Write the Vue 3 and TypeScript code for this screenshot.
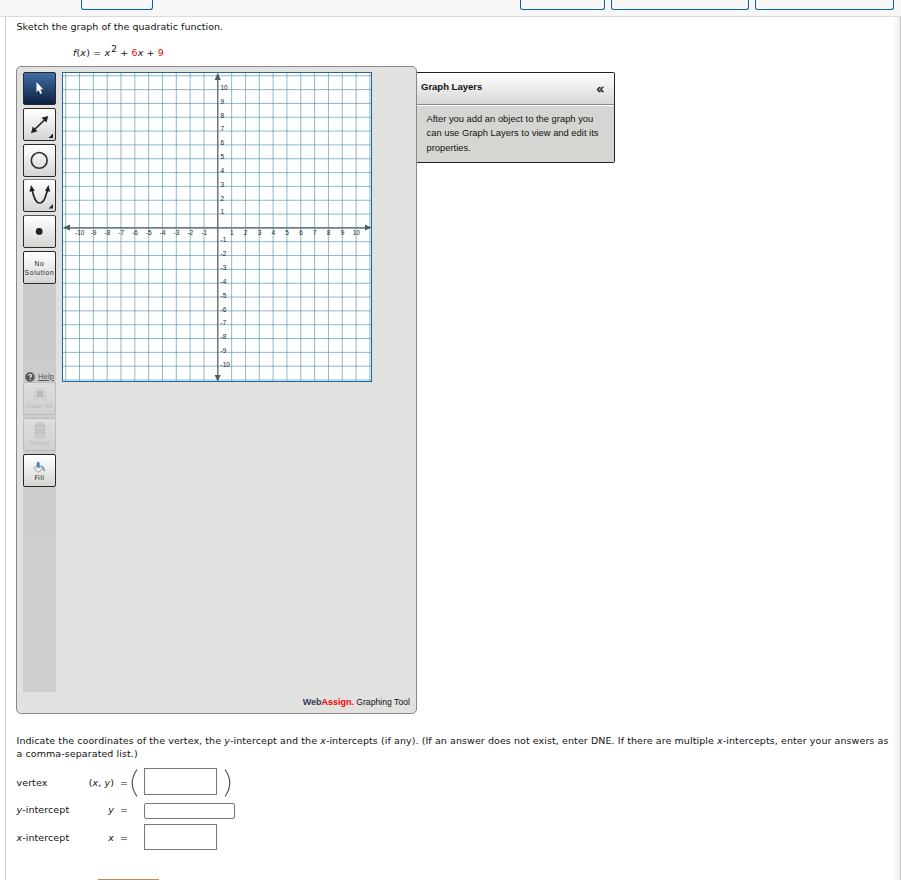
<script setup lang="ts">
const step = 13.83
const cx = 155.8
const cy = 155.9
const lines: number[] = Array.from({ length: 23 }, (_, i) => i - 11)
const labels: number[] = lines.filter((n) => n !== 0 && Math.abs(n) < 11)
</script>

<template>
  <div class="page">
    <header class="topbar">
      <span class="tab tab-a"></span>
      <span class="tab tab-b"></span>
      <span class="tab tab-c"></span>
      <span class="tab tab-d"></span>
    </header>
    <main class="content">
      <p class="prompt">Sketch the graph of the quadratic function.</p>
      <p class="formula"><i>f</i>(<i>x</i>) = <i>x</i><sup>2</sup> + <b>6</b><i>x</i> + <b>9</b></p>

      <section class="workspace">
        <div class="tool">
          <nav class="strip">
            <button class="btn active" aria-label="Select">
              <svg width="31" height="31" viewBox="0 0 31 31"><path d="M12.500 9V19l2.100-1.800 1.800 3.900 1.700-.8-1.800-3.800 2.800-.2z" fill="#fff" /></svg>
            </button>
            <button class="btn" aria-label="Line">
              <svg width="31" height="31" viewBox="0 0 31 31"><path d="M10 21 21.500 10" stroke="#222" stroke-width="1.700" /><path d="M24.200 7 22.500 13.500 17.500 8.800zM7 24.200 13.500 22.200 8.800 17.500zM29 24.500v4.500H24.500z" fill="#222" /></svg>
            </button>
            <button class="btn" aria-label="Circle">
              <svg width="31" height="31" viewBox="0 0 31 31"><circle cx="15.200" cy="15.400" r="7.900" fill="none" stroke="#2b2b2b" stroke-width="1.600" /></svg>
            </button>
            <button class="btn" aria-label="Parabola">
              <svg width="31" height="31" viewBox="0 0 31 31"><path d="M8 10C10.500 19 12 23 15.700 23S21 19 23.500 10" fill="none" stroke="#222" stroke-width="1.700" /><path d="M7 5 10.800 10.800 5.500 11.800zM24.500 5 26.200 11.800 21 10.800zM29 24V28.500H24.500z" fill="#222" /></svg>
            </button>
            <button class="btn" aria-label="Point">
              <svg width="31" height="31" viewBox="0 0 31 31"><circle cx="15.200" cy="15.400" r="3.400" fill="#222" /></svg>
            </button>
            <button class="btn words">No<br />Solution</button>
            <a class="help">
              <svg width="10" height="10" viewBox="0 0 9 9"><circle cx="4.500" cy="4.500" r="4" fill="#555" stroke="#777" /><path d="M3.200 3.400Q3.300 2.200 4.600 2.200T6 3.400Q6 4 4.700 4.700V5.500M4.700 6.400V7.300" fill="none" stroke="#fff" stroke-width="1" /></svg><u>Help</u>
            </a>
            <button class="btn faded">
              <svg width="12" height="12" viewBox="0 0 12 12"><rect x=".5" y=".5" width="11" height="11" fill="none" stroke="#c2c2c2" stroke-dasharray="1 1" /><rect x="2.500" y="2.500" width="7" height="7" fill="#bbb" /></svg><span>Clear All</span>
            </button>
            <button class="btn faded bin">
              <svg width="12" height="16" viewBox="0 0 12 16"><path d="M.5 3H11.500M4 2.500V1H8V2.500M1.500 4.500 2.300 15H9.700L10.500 4.500zM4 6V13M6 6V13M8 6V13" fill="none" stroke="#b8b8b8" stroke-width="1.200" /></svg><span>Delete</span>
            </button>
            <button class="btn fill">
              <svg width="13" height="13" viewBox="0 0 13 13"><path d="M1 7 5.500 3.500 9.500 8 5 11.500z" fill="#eee" stroke="#888" stroke-width=".8" /><path d="M4 6.200V1.800Q5 0 6.300 1.800V7" fill="#4a84c4" stroke="#477eb9" stroke-width=".6" /><path d="M7 4Q12 4.500 12.100 11 9.500 9 9.500 7z" fill="#6c9bcb" /></svg><span>Fill</span>
            </button>
          </nav>
          <svg class="plot" width="310" height="310" viewBox="0 0 310 310">
            <rect width="310" height="310" fill="#fff" />
            <g stroke="#468fad" stroke-opacity=".62" stroke-width="1">
              <line v-for="n in lines" :key="'v' + n" :x1="cx + n * step" :x2="cx + n * step" y1="0" y2="310" />
              <line v-for="n in lines" :key="'h' + n" x1="0" x2="310" :y1="cy + n * step" :y2="cy + n * step" />
            </g>
            <path :d="`M${cx} 2V308M2 ${cy}H308`" stroke="#53626b" stroke-width="1.100" />
            <path d="M155.700 1 158.800 8H152.600zM155.700 309.500 158.800 303H152.600zM1 155.600 8 152.600V158.600zM309.500 155.600 303 152.600V158.600z" fill="#535d61" />
            <g class="num">
              <text v-for="n in labels" :key="'x' + n" :x="cx + n * step + .2" y="163" text-anchor="middle">{{ n }}</text>
              <text v-for="n in labels" :key="'y' + n" x="158.500" :y="cy - n * step + (n < 0 ? .7 : .4)">{{ n }}</text>
            </g>
            <rect x=".5" y=".5" width="309" height="309" fill="none" stroke="#2864a4" />
          </svg>
          <footer class="brand"><strong>Web<em>Assign.</em></strong> Graphing Tool</footer>
        </div>
        <aside class="layers">
          <h2><span>Graph Layers</span><span class="chev">«</span></h2>
          <p>After you add an object to the graph you<br />can use Graph Layers to view and edit its<br />properties.</p>
        </aside>
      </section>

      <p class="question">Indicate the coordinates of the vertex, the <i>y</i>-intercept and the <i>x</i>-intercepts (if any). (If an answer does not exist, enter DNE. If there are multiple <i>x</i>-intercepts, enter your answers as<br />a comma-separated list.)</p>
      <div class="answers">
        <span>vertex</span><span class="lhs">(<i>x</i>, <i>y</i>)</span><span class="eq">=</span>
        <svg class="paren" width="7" height="28" viewBox="0 0 7 28"><path d="M6 .5Q-3.500 14 6 27.500" fill="none" stroke="#555" stroke-width="1.200" /></svg>
        <input class="box first" aria-label="vertex" />
        <svg class="paren end" width="7" height="28" viewBox="0 0 7 28"><path d="M1 .5Q10.500 14 1 27.500" fill="none" stroke="#555" stroke-width="1.200" /></svg>
      </div>
      <div class="answers second">
        <span><i>y</i>-intercept</span><span class="lhs"><i>y</i></span><span class="eq">=</span><span class="paren"></span><input class="box thin" aria-label="y-intercept" />
      </div>
      <div class="answers third">
        <span><i>x</i>-intercept</span><span class="lhs"><i>x</i></span><span class="eq">=</span><span class="paren"></span><input class="box" aria-label="x-intercept" />
      </div>
      <div class="next"></div>
    </main>
  </div>
</template>

<style>
body { margin: 0; background: #fff; overflow: hidden; }
</style>

<style scoped>
* { box-sizing: border-box; }
.page { width: 901px; height: 880px; overflow: hidden; font: 9.5px/13px Verdana, "DejaVu Sans", sans-serif; letter-spacing: .08px; color: #111; background: #fff; }
.topbar { height: 17px; display: flex; background: #f7f7f7; border-bottom: 1px solid #ddd; padding-left: 81px; }
.tab { height: 10px; border: 1px solid #086396; border-top: 0; border-radius: 0 0 3px 3px; flex: none; }
.tab-a { width: 72px; margin-right: 367px; }
.tab-b { width: 85px; margin-right: 6px; }
.tab-c { width: 138px; margin-right: 6px; }
.tab-d { width: 139px; }
.content { margin-left: 5px; height: 863px; border-left: 1px solid #ccc; border-right: 1px solid #c5c5c5; padding-left: 10px; background: linear-gradient(to left, #ededed, #fff 8px); }
p { margin: 0; }
.prompt { padding-top: 3px; height: 24px; white-space: nowrap; padding-left: .5px; letter-spacing: .03px; }
.formula { height: 25px; padding: 5px 0 0 57px; white-space: nowrap; letter-spacing: .14px; }
.formula sup { font-size: 9px; line-height: 0; vertical-align: 4px; margin-left: 1px; }
.formula b { font-weight: normal; color: #e00; }
.workspace { display: flex; align-items: flex-start; height: 648px; letter-spacing: 0; }
.tool { width: 401px; height: 648px; flex: none; border: 1px solid #888; border-radius: 5px; background: #e1e1df; display: grid; grid-template: 620px 20px / 33px 1fr; column-gap: 6px; padding: 5px 6px 0; }
.strip { background: linear-gradient(#dadada, #cbcbcb 35%, #cfcfcf); display: flex; flex-direction: column; height: 620px; }
.btn { width: 33px; height: 33px; flex: none; margin: 0 0 2.8px; padding: 0; border: 1px solid #292929; border-radius: 2px; background: linear-gradient(#fff, #d5d6d2); display: flex; align-items: center; justify-content: center; color: #222; font: 7px/8px "DejaVu Sans", sans-serif; box-shadow: 0 0 0 3px #e1e1df; clip-path: inset(0 0 -3px 0); }
.active { background: linear-gradient(#426ea5, #0b203d); }
.words { font: 6.700px/9px "Liberation Sans", sans-serif; letter-spacing: .7px; padding-top: 2px; margin: 0; box-shadow: none; }
.help { display: flex; align-items: center; gap: 3px; height: 10px; margin: 88px 0 0 2px; font: 7.200px/10px "DejaVu Sans", sans-serif; color: #555; letter-spacing: -.1px; }
.faded { border-color: #bcbcbc; background: linear-gradient(#dedede, #d0d0d0); color: #bbb; flex-direction: column; gap: 2px; font-size: 6.200px; white-space: nowrap; padding-top: 2px; box-shadow: none; }
.bin { gap: 1px; padding-top: 0; }
.fill { flex-direction: column; gap: 0; padding-top: 2px; font-size: 6.500px; letter-spacing: .3px; box-shadow: none; }
.fill svg { flex: none; }
.plot { display: block; }
.num { font: 6.500px "Liberation Sans", sans-serif; fill: #222; }
.brand { grid-column: 1 / 3; justify-self: end; font: 8.600px/20px "Liberation Sans", sans-serif; white-space: nowrap; color: #111; letter-spacing: .03px; }
.brand strong { color: #333b52; font-size: 9px; letter-spacing: -.03px; }
.brand em { font-style: normal; color: #f00; }
.layers { margin-top: 6px; width: 198px; height: 91px; border: 1px solid #222; border-left: 0; border-radius: 0 2px 2px 0; background: #d5d6d2; font-family: "Liberation Sans", sans-serif; }
.layers h2 { height: 32px; margin: 0 0 1px; padding: 0 10px 4px 4px; display: flex; justify-content: space-between; align-items: center; border-bottom: 1px solid #888; box-shadow: 0 1px #fff; background: linear-gradient(#fff, #d7d8d5); font-size: 9.500px; line-height: 27px; }
.layers .chev { font-size: 13.500px; padding-top: 4px; font-weight: normal; -webkit-text-stroke: .4px #111; }
.layers p { padding: 6px 0 0 9.500px; font-size: 9.380px; line-height: 14.300px; white-space: nowrap; }
.question { height: 53px; padding: 20px 0 0 .5px; white-space: nowrap; }
.answers { display: grid; grid-template-columns: 62px 36px 17px 13px 91px; align-items: center; height: 28px; margin-top: 2px; white-space: nowrap; position: relative; }
.answers > span { padding-bottom: 2px; }
.answers > span:first-child { padding-left: .5px; }
.lhs { text-align: right; }
.eq { padding-left: 6px; }
.box { width: 73px; height: 26px; border: 1px solid #777; border-radius: 0; background: #fff; padding: 0; margin: 0; display: block; }
.answers .paren { align-self: start; }
.answers .first { height: 27px; align-self: start; margin: -1px 0 0; }
.paren.end { position: absolute; left: 208px; top: 0; }
.second { height: 17px; margin-top: 5px; }
.thin { width: 91px; height: 16px; border-radius: 2px; }
.third { height: 28px; margin-top: 4px; }
.third > span { padding-top: 3px; }
.third .box { align-self: start; margin-top: 1px; }
.next { width: 61px; height: 2px; margin: 28px 0 0 82px; background: #c28b4c; }
</style>
